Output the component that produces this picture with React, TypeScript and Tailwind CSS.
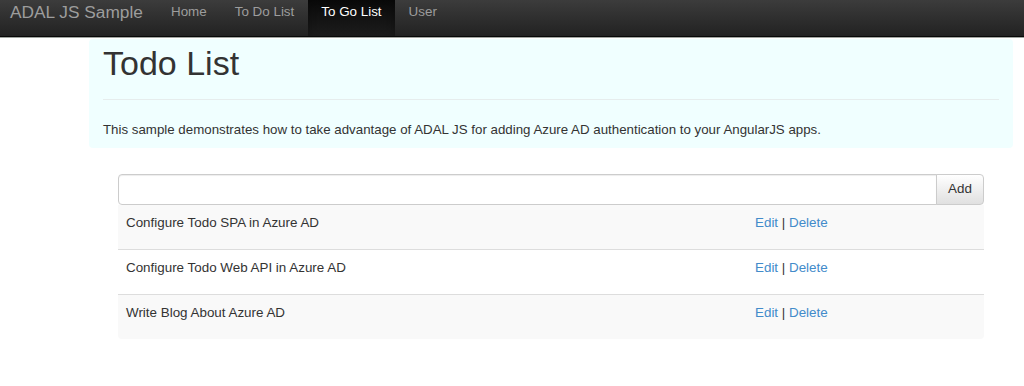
import React from "react";

const items = [
  "Configure Todo SPA in Azure AD",
  "Configure Todo Web API in Azure AD",
  "Write Blog About Azure AD",
];

export default function App() {
  return (
    <div
      className="w-[1024px] h-[386px] bg-white text-[#333] overflow-hidden"
      style={{ fontFamily: '"Liberation Sans", Arial, sans-serif' }}
    >
      {/* Navbar */}
      <div className="h-[37px] flex items-stretch bg-gradient-to-b from-[#3c3c3c] to-[#222] border-b border-[#080808]">
        <div className="pl-[10px] w-[157px] pt-[2px] text-[17.3px] leading-[20px] text-[#9d9d9d]">
          ADAL JS Sample
        </div>
        <div className="px-[14px] pt-[3px] text-[13.4px] leading-[18px] text-[#9d9d9d]">Home</div>
        <div className="px-[14px] pt-[3px] text-[13.4px] leading-[18px] text-[#9d9d9d]">To Do List</div>
        <div className="px-[13px] pt-[3px] text-[13.4px] leading-[18px] text-white bg-gradient-to-b from-[#0a0a0a] to-[#1c1c1c] shadow-[inset_0_3px_9px_rgba(0,0,0,0.25)]">
          To Go List
        </div>
        <div className="px-[14px] pt-[3px] text-[13.4px] leading-[18px] text-[#9d9d9d]">User</div>
      </div>
      <div className="h-px bg-[#a0a5a0]" />

      {/* Jumbotron */}
      <div className="ml-[89px] mt-px w-[924px] h-[109px] bg-[#f0ffff] rounded-[4px] px-[14px]">
        <h1 className="text-[34px] leading-[40px] pt-[4px] font-normal">Todo List</h1>
        <div className="mt-[16px] h-px bg-[#e6eded]" />
        <p className="mt-[21px] text-[13.3px] leading-[18px]">
          This sample demonstrates how to take advantage of ADAL JS for adding Azure AD authentication to your AngularJS apps.
        </p>
      </div>

      {/* Todo section */}
      <div className="ml-[118px] w-[866px] mt-[26px]">
        <div className="flex h-[31px]">
          <div className="flex-1 bg-white border border-[#ccc] rounded-l-[4px] shadow-[inset_0_1px_1px_rgba(0,0,0,0.075)]" />
          <button className="w-[48px] -ml-px border border-[#ccc] rounded-r-[4px] bg-gradient-to-b from-white to-[#e0e0e0] text-[13.4px] text-[#333]">
            Add
          </button>
        </div>
        <div className="rounded-b-[4px] overflow-hidden">
          {items.map((t, i) => (
            <div
              key={t}
              className={
                "grid grid-cols-[629px_1fr] text-[13.4px] leading-[18px] pt-[9px] " +
                (i === 0 ? "h-[44px] " : "h-[45px] border-t border-[#ddd] ") +
                (i % 2 === 0 ? "bg-[#f9f9f9]" : "bg-white")
              }
            >
              <div className="pl-[8px]">{t}</div>
              <div className="pl-[8px]">
                <span className="text-[#428bca]">Edit</span> | <span className="text-[#428bca]">Delete</span>
              </div>
            </div>
          ))}
        </div>
      </div>
    </div>
  );
}
